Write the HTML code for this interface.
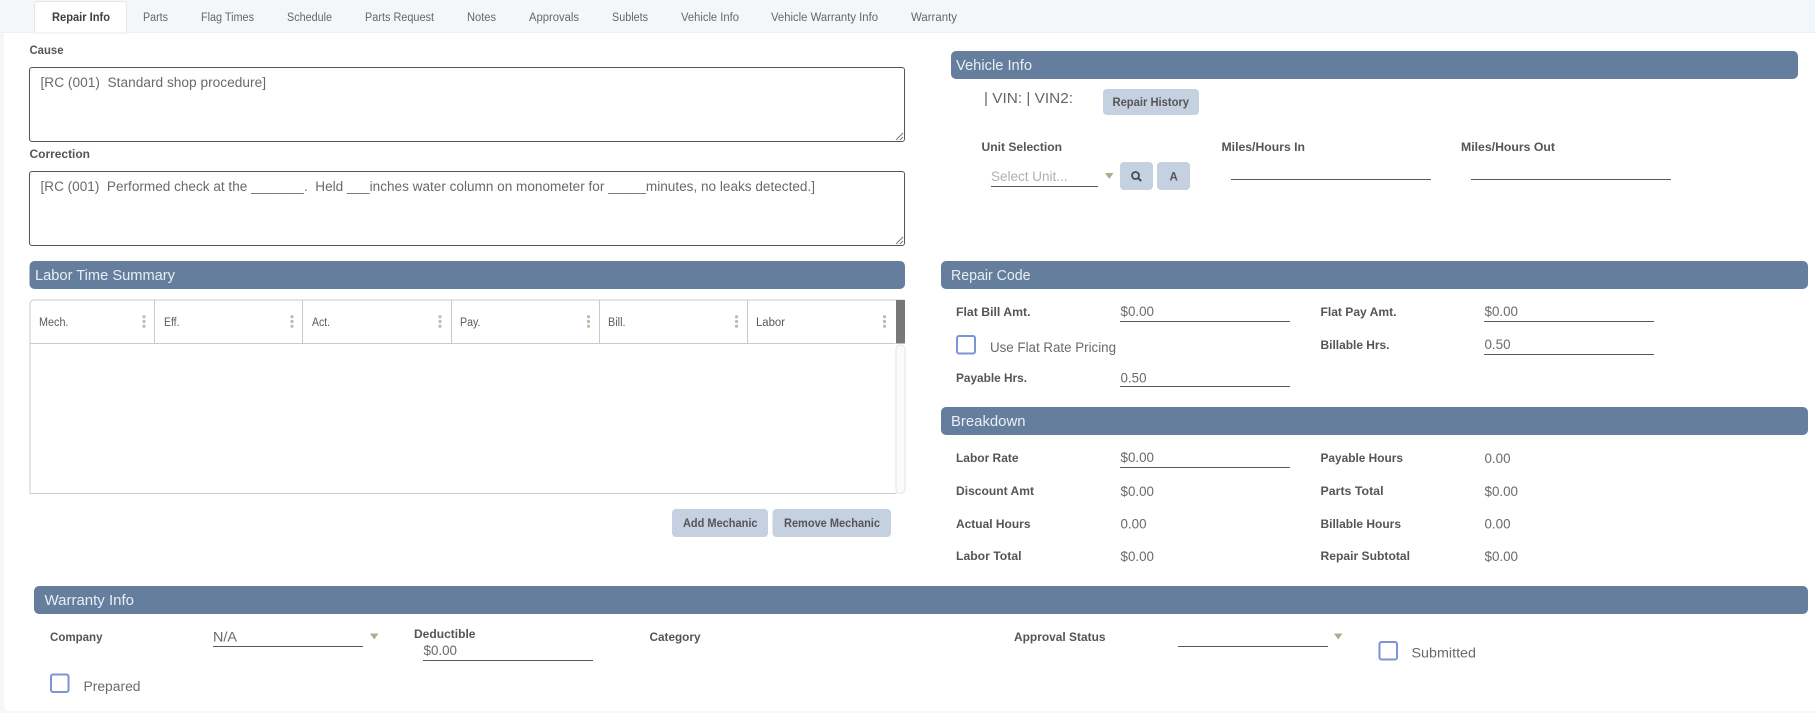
<!DOCTYPE html>
<html lang="en"><head><meta charset="utf-8"><title>Repair Info</title>
<style>
html,body{margin:0;padding:0;width:1815px;height:713px;overflow:hidden;background:#f4f7fa}
svg{display:block}
text{font-family:"Liberation Sans",Arial,sans-serif;fill:#5b5b5b;white-space:pre}
.tab{font-size:11.500px;fill:#666}
.at{font-size:11.500px;font-weight:700;fill:#3f3f3f}
.lb{font-size:11.500px;font-weight:700;fill:#555}
.v{font-size:13.500px;fill:#6a6a6a}
.h{font-size:15px;fill:#e9eef4}
.th{font-size:11.500px;fill:#5a5a5a}
.b{font-size:11.500px;font-weight:700;fill:#555}
.band{fill:#667e9e}
.btn{fill:#c5d1e1}
.u{fill:#5a5a5a}
.cb{fill:#fff;stroke:#7c94d6;stroke-width:2}
.ar{fill:#a9b08f}
.d{fill:#b9bfa5}
.ln{fill:#cbcbcb}
</style></head><body>
<svg width="1815" height="713" viewBox="0 0 1815 713" xmlns="http://www.w3.org/2000/svg">
<rect width="1815" height="713" fill="#f4f7fa"/>
<rect x="4" y="32" width="1815" height="679" rx="6" fill="#fff"/>
<rect x="0" y="32" width="1815" height="1" fill="#edf0f3"/>
<rect x="4" y="33" width="1811" height="2" fill="#fff"/>

<!-- tabs -->
<path d="M34.500 33V5a3.500 3.500 0 0 1 3.500-3.500h85a3.500 3.500 0 0 1 3.500 3.500V33z" fill="#fff" stroke="#e4e7ea"/>
<text class="at" x="52" y="21" textLength="58" lengthAdjust="spacingAndGlyphs">Repair Info</text>
<text class="tab" x="143" y="21" textLength="25" lengthAdjust="spacingAndGlyphs">Parts</text>
<text class="tab" x="201" y="21" textLength="53" lengthAdjust="spacingAndGlyphs">Flag Times</text>
<text class="tab" x="287" y="21" textLength="45" lengthAdjust="spacingAndGlyphs">Schedule</text>
<text class="tab" x="365" y="21" textLength="69" lengthAdjust="spacingAndGlyphs">Parts Request</text>
<text class="tab" x="467" y="21" textLength="29" lengthAdjust="spacingAndGlyphs">Notes</text>
<text class="tab" x="529" y="21" textLength="50" lengthAdjust="spacingAndGlyphs">Approvals</text>
<text class="tab" x="612" y="21" textLength="36" lengthAdjust="spacingAndGlyphs">Sublets</text>
<text class="tab" x="681" y="21" textLength="58" lengthAdjust="spacingAndGlyphs">Vehicle Info</text>
<text class="tab" x="771" y="21" textLength="107" lengthAdjust="spacingAndGlyphs">Vehicle Warranty Info</text>
<text class="tab" x="911" y="21" textLength="46" lengthAdjust="spacingAndGlyphs">Warranty</text>

<!-- cause / correction -->
<text class="lb" x="29.500" y="54" textLength="34" lengthAdjust="spacingAndGlyphs">Cause</text>
<rect x="29.500" y="67.500" width="875" height="74" rx="2.500" fill="#fff" stroke="#555"/>
<text class="v" x="40.500" y="87" textLength="225.500" lengthAdjust="spacingAndGlyphs" xml:space="preserve">[RC (001)  Standard shop procedure]</text>
<path d="M896 140l7-7M900 140l3-3" stroke="#777" stroke-width="1" fill="none"/>
<text class="lb" x="29.500" y="158" textLength="60.500" lengthAdjust="spacingAndGlyphs">Correction</text>
<rect x="29.500" y="171.500" width="875" height="74" rx="2.500" fill="#fff" stroke="#555"/>
<text class="v" x="40.500" y="191" textLength="774.500" lengthAdjust="spacingAndGlyphs" xml:space="preserve">[RC (001)  Performed check at the _______.  Held ___inches water column on monometer for _____minutes, no leaks detected.]</text>
<path d="M896 244l7-7M900 244l3-3" stroke="#777" stroke-width="1" fill="none"/>

<!-- vehicle info -->
<rect class="band" x="951" y="51" width="847" height="28" rx="5"/>
<text class="h" x="956" y="70" textLength="76" lengthAdjust="spacingAndGlyphs">Vehicle Info</text>
<text x="984" y="103" font-size="15" textLength="89" lengthAdjust="spacingAndGlyphs" style="fill:#666">| VIN: | VIN2:</text>
<rect class="btn" x="1103" y="89" width="96" height="26" rx="4"/>
<text class="b" x="1112.500" y="106" textLength="76.500" lengthAdjust="spacingAndGlyphs">Repair History</text>
<text class="lb" x="981.500" y="151" textLength="80.500" lengthAdjust="spacingAndGlyphs">Unit Selection</text>
<text class="lb" x="1221.500" y="151" textLength="83.500" lengthAdjust="spacingAndGlyphs">Miles/Hours In</text>
<text class="lb" x="1461" y="151" textLength="94" lengthAdjust="spacingAndGlyphs">Miles/Hours Out</text>
<text class="v" x="991" y="181" textLength="76.500" lengthAdjust="spacingAndGlyphs" style="fill:#b0b0b0">Select Unit...</text>
<rect class="u" x="991" y="186" width="107" height="1"/>
<path class="ar" d="M1105 173h8.500l-4.250 6z"/>
<rect class="btn" x="1120" y="162" width="33" height="28" rx="4"/>
<circle cx="1135.500" cy="175.500" r="3.500" fill="none" stroke="#4a4a4a" stroke-width="1.800"/>
<path d="M1138.200 178.200l3 2.800" stroke="#4a4a4a" stroke-width="2" fill="none"/>
<rect class="btn" x="1157" y="162" width="33" height="28" rx="4"/>
<text class="b" x="1169.500" y="180.500" style="font-size:11.500px">A</text>
<rect class="u" x="1231" y="179" width="200" height="1"/>
<rect class="u" x="1471" y="179" width="200" height="1"/>

<!-- labor time summary -->
<rect class="band" x="29.500" y="261" width="875.500" height="28" rx="5"/>
<text class="h" x="35" y="280" textLength="140" lengthAdjust="spacingAndGlyphs">Labor Time Summary</text>
<path d="M30 494V304a4 4 0 0 1 4-4H905" fill="none" stroke="#cbcbcb"/>
<rect class="ln" x="29.500" y="493" width="867" height="1"/>
<rect class="ln" x="29.500" y="343" width="866" height="1"/>
<rect class="ln" x="154" y="300" width="1" height="43"/>
<rect class="ln" x="302" y="300" width="1" height="43"/>
<rect class="ln" x="451" y="300" width="1" height="43"/>
<rect class="ln" x="599" y="300" width="1" height="43"/>
<rect class="ln" x="747" y="300" width="1" height="43"/>
<text class="th" x="39" y="326" textLength="29.500" lengthAdjust="spacingAndGlyphs">Mech.</text>
<text class="th" x="164" y="326" textLength="15.500" lengthAdjust="spacingAndGlyphs">Eff.</text>
<text class="th" x="312" y="326" textLength="18" lengthAdjust="spacingAndGlyphs">Act.</text>
<text class="th" x="460" y="326" textLength="20.500" lengthAdjust="spacingAndGlyphs">Pay.</text>
<text class="th" x="608" y="326" textLength="17.500" lengthAdjust="spacingAndGlyphs">Bill.</text>
<text class="th" x="756" y="326" textLength="29" lengthAdjust="spacingAndGlyphs">Labor</text>
<g class="d">
<circle cx="144" cy="316.700" r="1.600"/><circle cx="144" cy="321.500" r="1.600"/><circle cx="144" cy="326.200" r="1.600"/>
<circle cx="292" cy="316.700" r="1.600"/><circle cx="292" cy="321.500" r="1.600"/><circle cx="292" cy="326.200" r="1.600"/>
<circle cx="440" cy="316.700" r="1.600"/><circle cx="440" cy="321.500" r="1.600"/><circle cx="440" cy="326.200" r="1.600"/>
<circle cx="588.500" cy="316.700" r="1.600"/><circle cx="588.500" cy="321.500" r="1.600"/><circle cx="588.500" cy="326.200" r="1.600"/>
<circle cx="736.500" cy="316.700" r="1.600"/><circle cx="736.500" cy="321.500" r="1.600"/><circle cx="736.500" cy="326.200" r="1.600"/>
<circle cx="884.500" cy="316.700" r="1.600"/><circle cx="884.500" cy="321.500" r="1.600"/><circle cx="884.500" cy="326.200" r="1.600"/>
</g>
<rect x="896" y="300" width="9" height="43.500" fill="#777"/>
<rect x="896" y="345" width="9" height="148.500" rx="4.500" fill="#fbfbfb" stroke="#e2e2e2"/>
<rect class="btn" x="672" y="509" width="96" height="28" rx="4"/>
<text class="b" x="683" y="527" textLength="74.500" lengthAdjust="spacingAndGlyphs">Add Mechanic</text>
<rect class="btn" x="772.500" y="509" width="118.500" height="28" rx="4"/>
<text class="b" x="784" y="527" textLength="96" lengthAdjust="spacingAndGlyphs">Remove Mechanic</text>

<!-- repair code -->
<rect class="band" x="941" y="261" width="867" height="28" rx="5"/>
<text class="h" x="951" y="280" textLength="79.500" lengthAdjust="spacingAndGlyphs">Repair Code</text>
<text class="lb" x="956" y="316" textLength="74.500" lengthAdjust="spacingAndGlyphs">Flat Bill Amt.</text>
<text class="v" x="1120.500" y="316" textLength="33.500" lengthAdjust="spacingAndGlyphs">$0.00</text>
<rect class="u" x="1120" y="321" width="170" height="1"/>
<text class="lb" x="1320.500" y="316" textLength="76" lengthAdjust="spacingAndGlyphs">Flat Pay Amt.</text>
<text class="v" x="1484.500" y="316" textLength="33.500" lengthAdjust="spacingAndGlyphs">$0.00</text>
<rect class="u" x="1484" y="321" width="170" height="1"/>
<rect class="cb" x="957" y="336" width="18" height="17.500" rx="2"/>
<text class="v" x="990" y="352" textLength="126" lengthAdjust="spacingAndGlyphs">Use Flat Rate Pricing</text>
<text class="lb" x="1320.500" y="349" textLength="69" lengthAdjust="spacingAndGlyphs">Billable Hrs.</text>
<text class="v" x="1484.500" y="349" textLength="26" lengthAdjust="spacingAndGlyphs">0.50</text>
<rect class="u" x="1484" y="354" width="170" height="1"/>
<text class="lb" x="956" y="382" textLength="71" lengthAdjust="spacingAndGlyphs">Payable Hrs.</text>
<text class="v" x="1120.500" y="382.500" textLength="26" lengthAdjust="spacingAndGlyphs">0.50</text>
<rect class="u" x="1120" y="386" width="170" height="1"/>

<!-- breakdown -->
<rect class="band" x="941" y="407" width="867" height="28" rx="5"/>
<text class="h" x="951" y="426" textLength="74.500" lengthAdjust="spacingAndGlyphs">Breakdown</text>
<text class="lb" x="956" y="462" textLength="62.500" lengthAdjust="spacingAndGlyphs">Labor Rate</text>
<text class="v" x="1120.500" y="462" textLength="33.500" lengthAdjust="spacingAndGlyphs">$0.00</text>
<rect class="u" x="1120" y="467" width="170" height="1"/>
<text class="lb" x="1320.500" y="462" textLength="82.500" lengthAdjust="spacingAndGlyphs">Payable Hours</text>
<text class="v" x="1484.500" y="463" textLength="26" lengthAdjust="spacingAndGlyphs">0.00</text>
<text class="lb" x="956" y="495" textLength="78" lengthAdjust="spacingAndGlyphs">Discount Amt</text>
<text class="v" x="1120.500" y="496" textLength="33.500" lengthAdjust="spacingAndGlyphs">$0.00</text>
<text class="lb" x="1320.500" y="495" textLength="63" lengthAdjust="spacingAndGlyphs">Parts Total</text>
<text class="v" x="1484.500" y="496" textLength="33.500" lengthAdjust="spacingAndGlyphs">$0.00</text>
<text class="lb" x="956" y="528" textLength="74.500" lengthAdjust="spacingAndGlyphs">Actual Hours</text>
<text class="v" x="1120.500" y="528.500" textLength="26" lengthAdjust="spacingAndGlyphs">0.00</text>
<text class="lb" x="1320.500" y="528" textLength="80.500" lengthAdjust="spacingAndGlyphs">Billable Hours</text>
<text class="v" x="1484.500" y="528.500" textLength="26" lengthAdjust="spacingAndGlyphs">0.00</text>
<text class="lb" x="956" y="560" textLength="65.500" lengthAdjust="spacingAndGlyphs">Labor Total</text>
<text class="v" x="1120.500" y="561" textLength="33.500" lengthAdjust="spacingAndGlyphs">$0.00</text>
<text class="lb" x="1320.500" y="560" textLength="89.500" lengthAdjust="spacingAndGlyphs">Repair Subtotal</text>
<text class="v" x="1484.500" y="561" textLength="33.500" lengthAdjust="spacingAndGlyphs">$0.00</text>

<!-- warranty info -->
<rect class="band" x="34" y="586" width="1774" height="28" rx="5"/>
<text class="h" x="44.500" y="605" textLength="89.500" lengthAdjust="spacingAndGlyphs">Warranty Info</text>
<text class="lb" x="50" y="641" textLength="52.500" lengthAdjust="spacingAndGlyphs">Company</text>
<text class="v" x="213" y="641.500" textLength="24" lengthAdjust="spacingAndGlyphs">N/A</text>
<rect class="u" x="213" y="646" width="150" height="1"/>
<path class="ar" d="M370 633.500h8.500l-4.250 6z"/>
<text class="lb" x="414" y="638" textLength="61.500" lengthAdjust="spacingAndGlyphs">Deductible</text>
<text class="v" x="423.500" y="655" textLength="33.500" lengthAdjust="spacingAndGlyphs">$0.00</text>
<rect class="u" x="423" y="660" width="170" height="1"/>
<text class="lb" x="649.500" y="641" textLength="51" lengthAdjust="spacingAndGlyphs">Category</text>
<text class="lb" x="1014" y="641" textLength="91.500" lengthAdjust="spacingAndGlyphs">Approval Status</text>
<rect class="u" x="1178" y="646" width="150" height="1"/>
<path class="ar" d="M1334 633.500h8.500l-4.250 6z"/>
<rect class="cb" x="1379.500" y="642" width="17.500" height="17.500" rx="2"/>
<text class="v" x="1411.500" y="657.500" textLength="64.500" lengthAdjust="spacingAndGlyphs">Submitted</text>
<rect class="cb" x="51" y="674.500" width="17.500" height="17.500" rx="2"/>
<text class="v" x="83.500" y="691" textLength="57" lengthAdjust="spacingAndGlyphs">Prepared</text>
</svg>
</body></html>
